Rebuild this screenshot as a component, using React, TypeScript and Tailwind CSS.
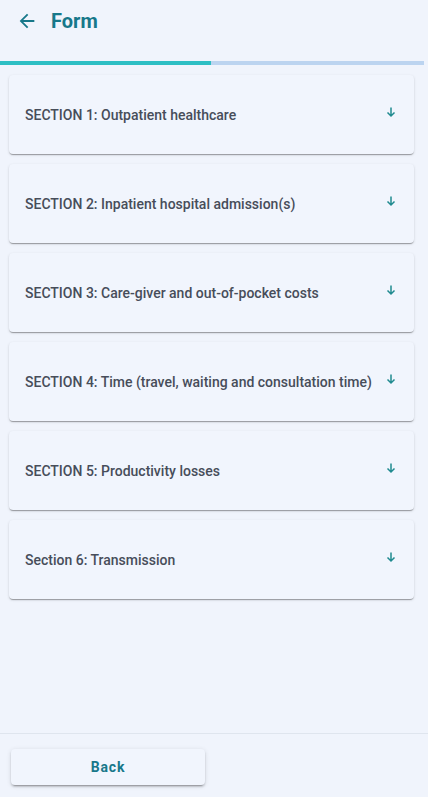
import React from 'react';

const sections = [
  'SECTION 1: Outpatient healthcare',
  'SECTION 2: Inpatient hospital admission(s)',
  'SECTION 3: Care-giver and out-of-pocket costs',
  'SECTION 4: Time (travel, waiting and consultation time)',
  'SECTION 5: Productivity losses',
  'Section 6: Transmission',
];

const ArrowDown = () => (
  <svg width="12" height="12" viewBox="0 0 24 24" fill="none" stroke="#1f8a8f" strokeWidth={3}>
    <path d="M12 3v17M5 13l7 7 7-7" />
  </svg>
);

export default function App() {
  return (
    <div className="h-[797px] w-[428px] bg-[#f0f4fc] flex flex-col overflow-hidden" style={{ fontFamily: 'Roboto, "Liberation Sans", sans-serif' }}>
      {/* Header */}
      <div className="h-[42px] flex items-center pl-[16px]">
        <svg width="22" height="22" viewBox="0 0 24 24" fill="#17788a">
          <path d="M20 11H7.83l5.59-5.59L12 4l-8 8 8 8 1.41-1.41L7.83 13H20v-2z" />
        </svg>
        <span className="ml-[13px] text-[20px] font-bold text-[#17788a]">Form</span>
      </div>

      {/* Progress */}
      <div className="mt-[19px] h-[4px] w-[424px] flex">
        <div className="w-[211px] bg-[#2ebfc4]" />
        <div className="flex-1 bg-[#bcd4f0]" />
      </div>

      {/* Sections */}
      <div className="flex-1 flex flex-col gap-[10px] pt-[10px] pl-[9px] w-[414px]">
        {sections.map(title => (
          <div
            key={title}
            className="h-[79px] rounded-[4px] bg-[#f1f5fd] shadow-[0_2px_1px_-1px_rgba(0,0,0,0.2),0_1px_1px_0_rgba(0,0,0,0.14),0_1px_3px_0_rgba(0,0,0,0.12)] flex items-center justify-between pl-[16px] pr-[17px]"
          >
            <span className="mt-[1px] text-[14px] text-[#474d5a] font-medium">{title}</span>
            <span className="-mt-[5px] flex"><ArrowDown /></span>
          </div>
        ))}
      </div>

      {/* Footer */}
      <div className="h-[64px] border-t border-[#dfe5ee] pt-[15px] pl-[11px]">
        <button className="w-[194px] h-[36px] rounded-[4px] bg-[#f1f5fd] shadow-[0_3px_1px_-2px_rgba(0,0,0,0.2),0_2px_2px_0_rgba(0,0,0,0.14),0_1px_5px_0_rgba(0,0,0,0.12)] text-[14px] font-bold tracking-[0.06em] text-[#17788a]">
          Back
        </button>
      </div>
    </div>
  );
}
